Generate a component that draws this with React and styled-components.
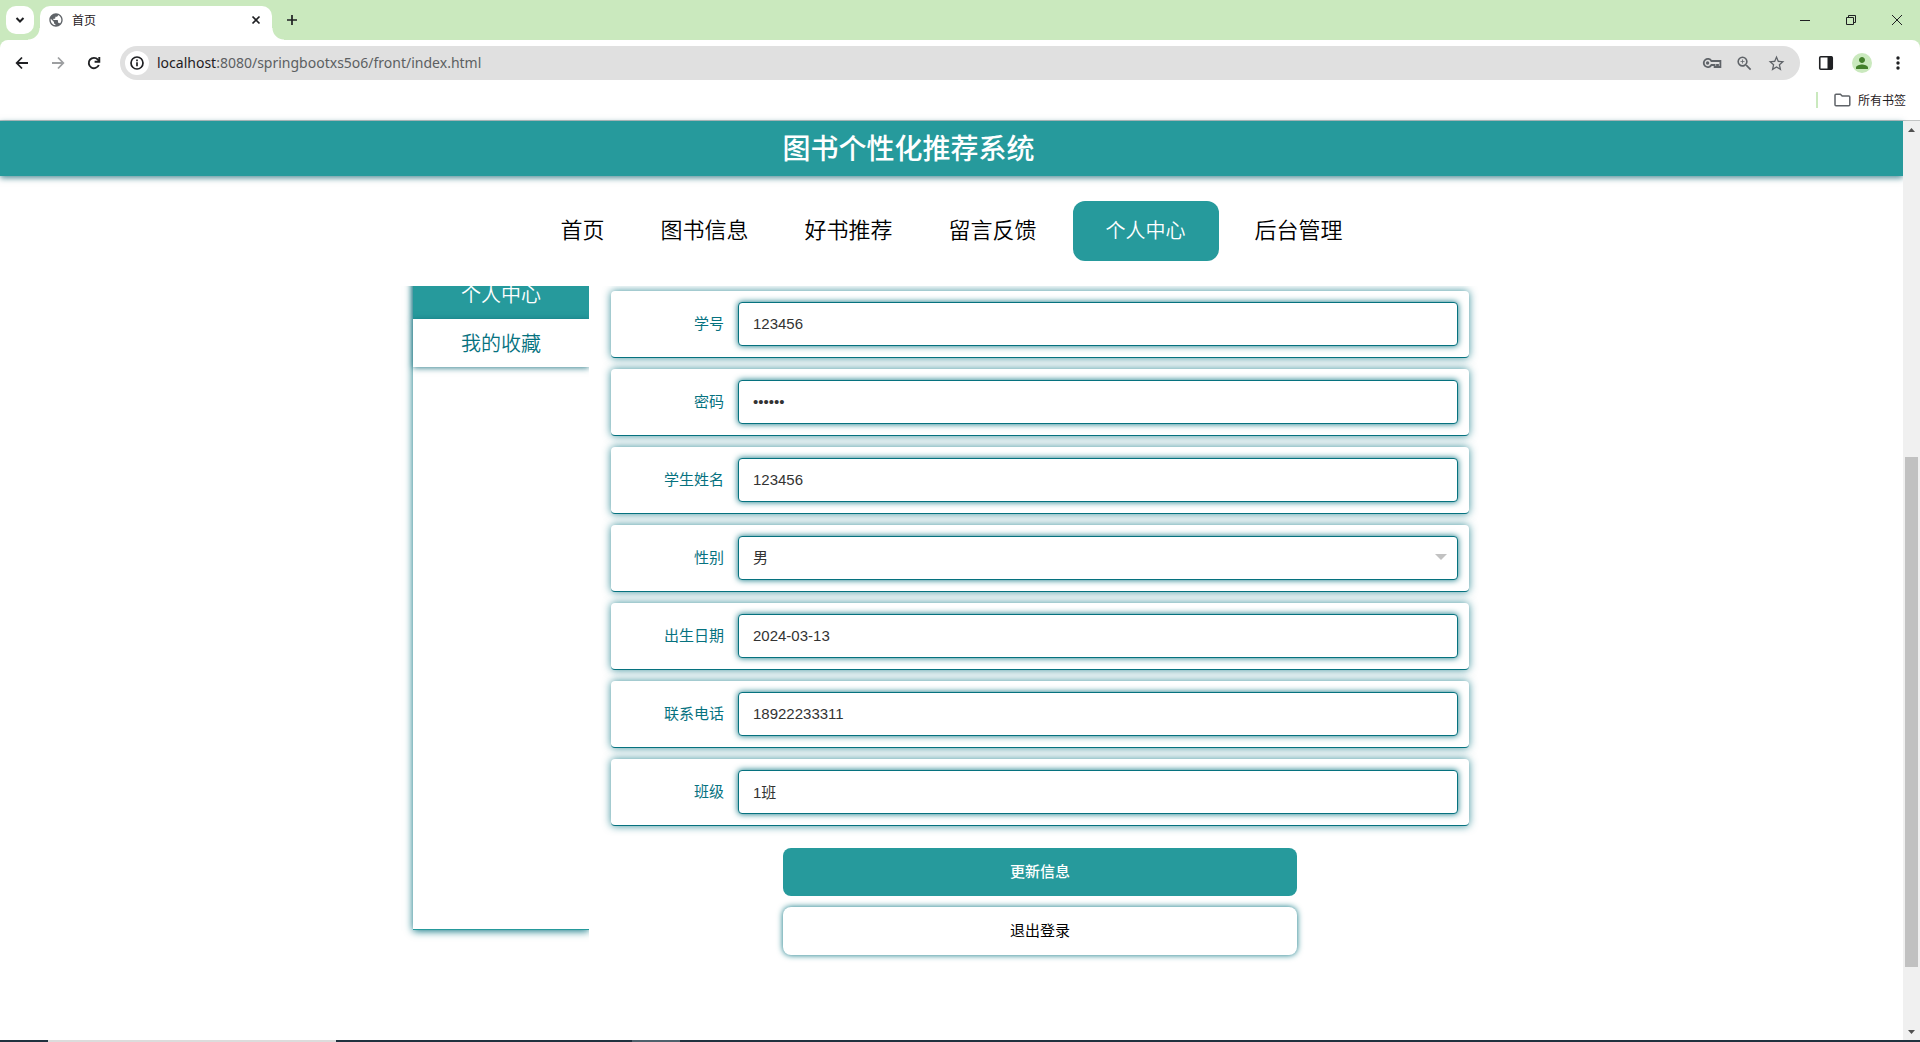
import React from "react";
import styled, { createGlobalStyle, css } from "styled-components";
import { MdPublic, MdStarBorder, MdZoomIn, MdPerson } from "react-icons/md";

const TEAL = "#269a9c";
const DEEP = "#06727f";
const MINT = "#cae9be";
const UI_FONT = '"Noto Sans", "Noto Sans CJK SC", sans-serif';
const PAGE_FONT = '"Liberation Sans", "Noto Sans CJK SC", sans-serif';

const GlobalStyle = createGlobalStyle`
  * { box-sizing: border-box; }
  body { margin: 0; background: #fff; font-family: ${PAGE_FONT}; }
  button, input, select { font: inherit; margin: 0; }
`;

const Window = styled.div`
  display: flex;
  flex-direction: column;
  min-height: 100vh;
`;

/* ---------- browser frame ---------- */

const TabStrip = styled.header`
  display: flex;
  height: 40px;
  padding-left: 6px;
  background: ${MINT};
  font-family: ${UI_FONT};
`;

const PlainButton = styled.button`
  display: flex;
  align-items: center;
  justify-content: center;
  padding: 0;
  border: 0;
  background: none;
  color: #1f2023;
`;

const TabSearch = styled(PlainButton)`
  width: 28px;
  height: 28px;
  margin-top: 6px;
  border-radius: 10px;
  background: #fff;
`;

const Tab = styled.div`
  position: relative;
  display: flex;
  align-items: center;
  width: 232px;
  height: 34px;
  margin: 6px 0 0 6px;
  padding: 0 8px 6px;
  border-radius: 10px 10px 0 0;
  background: #fff;
  color: #1f2023;
  font-size: 12px;

  &::before,
  &::after {
    content: "";
    position: absolute;
    bottom: 0;
    width: 12px;
    height: 12px;
  }
  &::before {
    left: -12px;
    background: radial-gradient(circle at 0 0, transparent 11px, #fff 12px);
  }
  &::after {
    right: -12px;
    background: radial-gradient(circle at 100% 0, transparent 11px, #fff 12px);
  }
`;

const TabTitle = styled.span`
  flex: 1;
  margin-left: 8px;
`;

const TabClose = styled(PlainButton)`
  width: 16px;
  height: 16px;
`;

const NewTab = styled(PlainButton)`
  width: 28px;
  height: 28px;
  margin: 6px 0 0 6px;
`;

const WindowControls = styled.div`
  display: flex;
  margin-left: auto;
`;

const WindowButton = styled(PlainButton)`
  width: 46px;
  height: 40px;
`;

const ToolbarShell = styled.div`
  background: ${MINT};
`;

const Toolbar = styled.div`
  display: flex;
  align-items: center;
  height: 46px;
  padding: 0 4px;
  border-radius: 8px 8px 0 0;
  background: #fff;
  font-family: ${UI_FONT};
`;

const ToolButton = styled(PlainButton)`
  width: ${(p) => p.$w || 36}px;
  height: 34px;
  color: ${(p) => p.$color || "#1f2023"};
`;

const AddressBar = styled.div`
  display: flex;
  flex: 1;
  align-items: center;
  height: 34px;
  margin: 0 8px;
  padding: 0 8px 0 5px;
  border-radius: 17px;
  background: #e0e0e0;
`;

const SiteInfo = styled(PlainButton)`
  width: 24px;
  height: 24px;
  border-radius: 12px;
  background: #fff;
`;

const Address = styled.div`
  flex: 1;
  margin-left: 8px;
  color: #5c5f62;
  font-size: 14px;
  line-height: 20px;

  b {
    color: #1f2023;
    font-weight: 400;
  }
`;

const Avatar = styled.span`
  display: flex;
  align-items: center;
  justify-content: center;
  width: 20px;
  height: 20px;
  border-radius: 10px;
  background: ${MINT};
  color: #43802b;
`;

const BookmarkBar = styled.div`
  display: flex;
  align-items: center;
  justify-content: flex-end;
  height: 35px;
  padding: 0 14px 6px 0;
  border-bottom: 1px solid #c2c4c4;
  font-family: ${UI_FONT};
`;

const BookmarkDivider = styled.span`
  width: 2px;
  height: 16px;
  margin-right: 16px;
  background: ${MINT};
`;

const BookmarkFolder = styled(PlainButton)`
  gap: 7px;
  font-size: 12px;
`;

const Viewport = styled.div`
  display: flex;
  flex: 1;
`;

const Page = styled.main`
  flex: 1;
  min-width: 0;
`;

const ScrollTrack = styled.div`
  display: flex;
  flex-direction: column;
  align-items: center;
  width: 17px;
  background: #f0f0f0;
`;

const ScrollArrow = styled.div`
  display: flex;
  align-items: center;
  justify-content: center;
  height: 17px;
`;

const ScrollSpace = styled.div`
  flex: ${(p) => p.$share};
`;

const ScrollThumb = styled.div`
  flex: 510;
  width: 13px;
  background: #c1c1c1;
`;

const TaskEdge = styled.footer`
  display: flex;
  height: 2px;
  background: #20323f;
`;

const TaskPiece = styled.span`
  width: ${(p) => p.$w}px;
  margin-left: ${(p) => p.$gap}px;
  background: ${(p) => p.$color};
`;

/* ---------- site ---------- */

const Banner = styled.div`
  display: flex;
  justify-content: center;
  padding: 2px 86px 0 0;
  background: ${TEAL};
  box-shadow: 0 2px 6px rgba(6, 90, 105, 0.7);
`;

const SiteTitle = styled.h1`
  margin: 0;
  color: #fff;
  font-size: 28px;
  font-weight: 500;
  line-height: 53px;
`;

const SiteNav = styled.nav`
  display: flex;
  align-items: center;
  justify-content: center;
  height: 110px;
`;

const NavLink = styled.a`
  padding: 0 28px;
  color: #000;
  font-size: 22px;
  font-weight: 350;
  line-height: 60px;
  text-decoration: none;
  white-space: nowrap;

  ${(p) =>
    p.$active &&
    css`
      margin: 0 8px;
      padding: 0 33px;
      border-radius: 12px;
      background: ${TEAL};
      color: #fff;
      font-size: 20px;
    `}
`;

const Content = styled.div`
  display: flex;
  align-items: flex-start;
  gap: 22px;
  max-width: 1101px;
  margin: 0 auto;
  padding-right: 33px;
  overflow: hidden;
`;

const SideClip = styled.aside`
  flex: none;
  width: 188px;
  padding: 0 0 12px 12px;
  overflow: hidden;
`;

const SideMenu = styled.div`
  height: 659px;
  margin-top: -15px;
  border-bottom: 1px solid ${TEAL};
  box-shadow: 0 1px 8px ${DEEP};
`;

const SideLink = styled.a`
  display: block;
  padding-top: ${(p) => (p.$active ? 0 : 2)}px;
  background: ${(p) => (p.$active ? TEAL : "#fff")};
  box-shadow: 0 1px 6px rgba(6, 100, 115, 0.8);
  color: ${(p) => (p.$active ? "#fff" : DEEP)};
  font-size: 20px;
  font-weight: 350;
  line-height: ${(p) => (p.$active ? 48 : 46)}px;
  text-align: center;
  text-decoration: none;
`;

const ProfileForm = styled.form`
  display: flex;
  flex: 1;
  flex-direction: column;
  gap: 11px;
  min-width: 0;
  padding: 5px 0 12px;
  font-size: 15px;
`;

const Row = styled.div`
  display: flex;
  align-items: center;
  gap: 14px;
  padding: 11px;
  border-bottom: 1px solid ${DEEP};
  border-radius: 4px;
  background: #fff;
  box-shadow: 0 0 8px rgba(6, 114, 127, 0.8);
`;

const Label = styled.label`
  flex: none;
  width: 102px;
  padding-bottom: 4px;
  color: ${DEEP};
  text-align: right;
`;

const control = css`
  width: 100%;
  height: 44px;
  padding: 0 14px 2px;
  border: 1px solid ${DEEP};
  border-radius: 4px;
  outline: none;
  background: #fff;
  box-shadow: 0 0 6px ${DEEP};
  color: #333;
`;

const Field = styled.input`
  ${control}
`;

const SelectBox = styled.div`
  position: relative;
  flex: 1;
`;

const Select = styled.select`
  ${control}
  display: block;
  appearance: none;
`;

const Caret = styled.svg`
  position: absolute;
  top: 18px;
  right: 11px;
  pointer-events: none;
`;

const Actions = styled.div`
  display: flex;
  flex-direction: column;
  align-self: center;
  gap: 11px;
  width: 60%;
  margin-top: 11px;
`;

const ActionButton = styled.button`
  height: 48px;
  padding: 0 0 4px;
  border: 0;
  border-radius: 8px;
  background: ${(p) => (p.$primary ? TEAL : "#fff")};
  box-shadow: ${(p) => (p.$primary ? "none" : `0 0 6px ${DEEP}`)};
  color: ${(p) => (p.$primary ? "#fff" : "#000")};
  font-weight: ${(p) => (p.$primary ? 500 : 400)};
`;

const NAV = ["首页", "图书信息", "好书推荐", "留言反馈", "个人中心", "后台管理"];

const FIELDS = [
  { id: "account", label: "学号", value: "123456" },
  { id: "password", label: "密码", value: "123456", type: "password" },
  { id: "name", label: "学生姓名", value: "123456" },
  { id: "gender", label: "性别", value: "男", options: ["男", "女"] },
  { id: "birthday", label: "出生日期", value: "2024-03-13" },
  { id: "phone", label: "联系电话", value: "18922233311" },
  { id: "class", label: "班级", value: "1班" },
];

function StrokeIcon({ size, d, width = 2, children }) {
  return (
    <svg
      width={size}
      height={size}
      viewBox={`0 0 ${size} ${size}`}
      fill="none"
      stroke="currentColor"
      strokeWidth={width}
    >
      <path d={d} />
      {children}
    </svg>
  );
}

function KeyIcon() {
  return (
    <svg width="20" height="12" viewBox="0 0 20 12" fill="none" stroke="#5f6368" strokeWidth="1.8">
      <path d="M9.4 4A4.1 4.1 0 1 0 9.4 8H12.6v2h2.4V8h1v2h2.4V4z" />
      <circle cx="5.6" cy="6" r="1.7" fill="#5f6368" stroke="none" />
    </svg>
  );
}

function PanelIcon() {
  return (
    <svg width="16" height="16" viewBox="0 0 16 16">
      <rect x="1.75" y="1.75" width="12.5" height="12.5" rx="1" fill="none" stroke="#1f2023" strokeWidth="1.6" />
      <path d="M9.5 1.5H14v13H9.5z" fill="#1f2023" />
    </svg>
  );
}

function FolderIcon() {
  return (
    <svg width="17" height="14" viewBox="0 0 17 14" fill="none" stroke="#5f6368" strokeWidth="1.5">
      <path d="M2 1.2h4.4l1.8 1.9h6.6q1 0 1 1v7.6q0 1-1 1H2q-1 0-1-1V2.2q0-1 1-1z" />
    </svg>
  );
}

function BrowserFrame() {
  return (
    <>
      <TabStrip>
        <TabSearch aria-label="搜索标签页">
          <StrokeIcon size={10} d="M1.5 3L5 6.5 8.5 3" />
        </TabSearch>
        <Tab>
          <MdPublic size={16} color="#5f6368" />
          <TabTitle>首页</TabTitle>
          <TabClose aria-label="关闭标签页">
            <StrokeIcon size={10} d="M1.5 1.5l7 7M8.5 1.5l-7 7" width={1.7} />
          </TabClose>
        </Tab>
        <NewTab aria-label="新标签页">
          <StrokeIcon size={12} d="M6 1v10M1 6h10" width={1.7} />
        </NewTab>
        <WindowControls>
          <WindowButton aria-label="最小化">
            <StrokeIcon size={10} d="M0 5.5h10" width={1} />
          </WindowButton>
          <WindowButton aria-label="还原">
            <StrokeIcon size={10} d="M.5 2.5h7v7h-7zM2.5 2.5v-2h7v7h-2" width={1} />
          </WindowButton>
          <WindowButton aria-label="关闭">
            <StrokeIcon size={10} d="M0 0l10 10M10 0L0 10" width={1} />
          </WindowButton>
        </WindowControls>
      </TabStrip>
      <ToolbarShell>
        <Toolbar>
          <ToolButton aria-label="后退">
            <StrokeIcon size={14} d="M13 7H2M7 1.5L1.7 7 7 12.5" width={1.8} />
          </ToolButton>
          <ToolButton aria-label="前进" $color="#9d9fa1">
            <StrokeIcon size={14} d="M1 7h11M7 1.5L12.3 7 7 12.5" width={1.8} />
          </ToolButton>
          <ToolButton aria-label="重新加载">
            <StrokeIcon size={14} d="M11.8 9A5.2 5.2 0 1 1 10.9 3.6L12 5" width={1.9}>
              <path d="M12.3 1v4.8H7.6" />
            </StrokeIcon>
          </ToolButton>
          <AddressBar>
            <SiteInfo aria-label="网站信息">
              <StrokeIcon size={14} d="M7 6.2v4M7 3.6v1.7" width={1.7}>
                <circle cx="7" cy="7" r="6" />
              </StrokeIcon>
            </SiteInfo>
            <Address>
              <b>localhost</b>:8080/springbootxs5o6/front/index.html
            </Address>
            <ToolButton $w={32} aria-label="密码">
              <KeyIcon />
            </ToolButton>
            <ToolButton $w={32} $color="#5f6368" aria-label="缩放">
              <MdZoomIn size={19} />
            </ToolButton>
            <ToolButton $w={32} $color="#5f6368" aria-label="收藏">
              <MdStarBorder size={19} />
            </ToolButton>
          </AddressBar>
          <ToolButton aria-label="侧边栏">
            <PanelIcon />
          </ToolButton>
          <ToolButton aria-label="个人资料">
            <Avatar>
              <MdPerson size={18} />
            </Avatar>
          </ToolButton>
          <ToolButton aria-label="菜单">
            <svg width="4" height="14" fill="currentColor">
              <circle cx="2" cy="2" r="1.7" />
              <circle cx="2" cy="7" r="1.7" />
              <circle cx="2" cy="12" r="1.7" />
            </svg>
          </ToolButton>
        </Toolbar>
      </ToolbarShell>
      <BookmarkBar>
        <BookmarkDivider />
        <BookmarkFolder>
          <FolderIcon />
          所有书签
        </BookmarkFolder>
      </BookmarkBar>
    </>
  );
}

function FormRow({ id, label, value, type = "text", options }) {
  return (
    <Row>
      <Label htmlFor={id}>{label}</Label>
      {options ? (
        <SelectBox>
          <Select id={id} defaultValue={value}>
            {options.map((o) => (
              <option key={o}>{o}</option>
            ))}
          </Select>
          <Caret width="12" height="6">
            <path d="M0 0h12L6 6z" fill="#c2c2c2" />
          </Caret>
        </SelectBox>
      ) : (
        <Field id={id} type={type} defaultValue={value} />
      )}
    </Row>
  );
}

export default function App() {
  return (
    <Window>
      <GlobalStyle />
      <BrowserFrame />
      <Viewport>
        <Page>
          <Banner>
            <SiteTitle>图书个性化推荐系统</SiteTitle>
          </Banner>
          <SiteNav>
            {NAV.map((name) => (
              <NavLink key={name} href="#" $active={name === "个人中心"}>
                {name}
              </NavLink>
            ))}
          </SiteNav>
          <Content>
            <SideClip>
              <SideMenu>
                <SideLink href="#" $active>
                  个人中心
                </SideLink>
                <SideLink href="#">我的收藏</SideLink>
              </SideMenu>
            </SideClip>
            <ProfileForm>
              {FIELDS.map((f) => (
                <FormRow key={f.id} {...f} />
              ))}
              <Actions>
                <ActionButton type="button" $primary>
                  更新信息
                </ActionButton>
                <ActionButton type="button">退出登录</ActionButton>
              </Actions>
            </ProfileForm>
          </Content>
        </Page>
        <ScrollTrack>
          <ScrollArrow>
            <svg width="7" height="4">
              <path d="M0 4L3.5 0 7 4z" fill="#505050" />
            </svg>
          </ScrollArrow>
          <ScrollSpace $share={319} />
          <ScrollThumb />
          <ScrollSpace $share={56} />
          <ScrollArrow>
            <svg width="7" height="4">
              <path d="M0 0h7L3.5 4z" fill="#505050" />
            </svg>
          </ScrollArrow>
        </ScrollTrack>
      </Viewport>
      <TaskEdge>
        <TaskPiece $gap={48} $w={288} $color="#dcdcdc" />
        <TaskPiece $gap={296} $w={48} $color="#4f616c" />
      </TaskEdge>
    </Window>
  );
}
